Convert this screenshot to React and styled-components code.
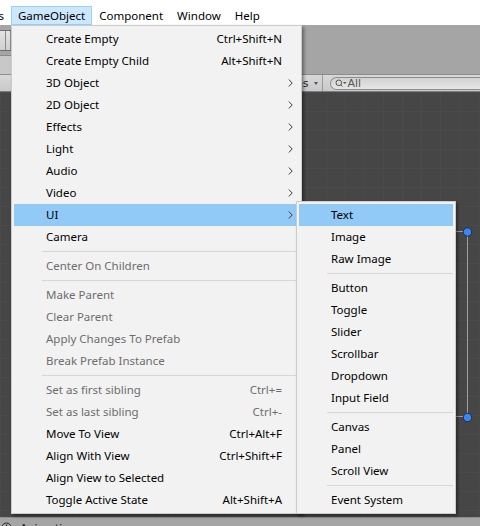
import React from 'react';
import styled, { createGlobalStyle } from 'styled-components';

const GlobalStyle = createGlobalStyle`
  html, body { margin: 0; padding: 0; overflow: hidden; background: #474747; }
  #root { width: 480px; height: 526px; }
`;

const Screen = styled.div`
  position: relative;
  width: 480px;
  height: 526px;
  overflow: hidden;
  display: flex;
  flex-direction: column;
  font-family: "Noto Sans", "Open Sans", sans-serif;
  font-size: 11.5px;
`;

/* ---------- Windows menu bar ---------- */
const MenuBar = styled.div`
  flex: none;
  height: 25px;
  background: #ffffff;
  display: flex;
  align-items: flex-end;
`;

const MenuBarClip = styled.div`
  flex: none;
  width: 11px;
  overflow: hidden;
  display: flex;
  justify-content: flex-end;
`;

const MenuBarItem = styled.div`
  flex: none;
  height: 19px;
  box-sizing: border-box;
  padding: 0 6px 1px;
  display: flex;
  align-items: center;
  white-space: nowrap;
  color: #000;
  border: 1px solid ${p => (p.$open ? '#99d1ff' : 'transparent')};
  background: ${p => (p.$open ? '#cce8ff' : 'transparent')};
`;

/* ---------- Unity background ---------- */
const MainToolbar = styled.div`
  flex: none;
  height: 27px;
  background: #a5a5a5;
  display: flex;
  align-items: flex-start;
  padding-top: 5px;
  box-sizing: border-box;
`;

const ToolGroup = styled.div`
  display: flex;
  margin-left: -22px;
  height: 21px;
  border: 1px solid #6f6f6f;
  border-radius: 3px;
  overflow: hidden;
  box-sizing: border-box;
`;

const ToolButton = styled.div`
  width: ${p => p.$w}px;
  height: 100%;
  background: linear-gradient(#e4e4e4, #cfcfcf);
  border-right: 1px solid #8a8a8a;
`;

const PanelsRow = styled.div`
  flex: none;
  height: 465px;
  display: flex;
`;

const Panel = styled.div`
  display: flex;
  flex-direction: column;
  overflow: hidden;
  position: relative;
  ${p => (p.$width ? `width: ${p.$width}px; flex: none;` : 'flex: 1; min-width: 0;')}
`;

const TabStrip = styled.div`
  flex: none;
  height: 22px;
  background: #a5a5a5;
  display: flex;
  align-items: flex-end;
`;

const Tab = styled.div`
  height: 19px;
  width: 90px;
  margin-left: -70px;
  background: #c8c8c8;
  border: 1px solid #8a8a8a;
  border-bottom: none;
  border-radius: 3px 3px 0 0;
  display: flex;
  align-items: center;
  justify-content: flex-end;
  padding-right: 2px;
  box-sizing: border-box;
`;

const PanelToolbar = styled.div`
  flex: none;
  height: 18px;
  box-sizing: border-box;
  background: linear-gradient(#d8d8d8, #c9c9c9);
  border-top: 1px solid #8c8c8c;
  border-bottom: 1px solid #7c7c7c;
  display: flex;
  align-items: center;
  padding-left: 12px;
  font-family: "DejaVu Sans", "Liberation Sans", sans-serif;
  font-size: 11px;
  color: #222;
`;

const GizmosButton = styled.div`
  flex: none;
  height: 100%;
  display: flex;
  align-items: center;
  gap: 5px;
  padding: 0 4px 0 6px;
  border-right: 1px solid #9a9a9a;
  white-space: nowrap;
`;

const DropTriangle = styled.span`
  width: 0;
  height: 0;
  border-left: 2.5px solid transparent;
  border-right: 2.5px solid transparent;
  border-top: 3px solid #555;
`;

const SearchField = styled.div`
  flex: none;
  width: 170px;
  height: 13px;
  margin-left: 7px;
  box-sizing: border-box;
  border: 1px solid #8c8c8c;
  border-right: none;
  border-radius: 7px 0 0 7px;
  background: linear-gradient(#d2d2d2, #e6e6e6);
  display: flex;
  align-items: center;
  padding-left: 4px;
  gap: 1px;
  color: #555;
  font-size: 11px;
`;

const DarkArea = styled.div`
  flex: 1;
  position: relative;
  background-color: #464646;
  background-image:
    linear-gradient(90deg, rgba(255,255,255,0.025) 1px, transparent 1px),
    linear-gradient(rgba(255,255,255,0.025) 1px, transparent 1px);
  background-size: 19px 19px;
`;

const HandlesLayer = styled.svg`
  position: absolute;
  left: 0;
  top: 0;
  width: 100%;
  height: 100%;
`;

const StatusBar = styled.div`
  flex: none;
  height: 22px;
  background: #a5a5a5;
  border-top: 1px solid #8f8f8f;
  box-sizing: border-box;
  display: flex;
  align-items: flex-start;
  gap: 8px;
  padding: 4px 0 0 1px;
  font-family: "DejaVu Sans", "Liberation Sans", sans-serif;
  font-size: 11px;
  color: #1a1a1a;
`;

/* ---------- Dropdown menus ---------- */
const Menu = styled.div`
  position: absolute;
  box-sizing: border-box;
  background: #f2f2f2;
  border: 1px solid #cccccc;
  padding: 2px;
  box-shadow: 2px 2px 3px rgba(0, 0, 0, 0.4);
`;

const MainMenu = styled(Menu)`
  left: 11px;
  top: 25px;
  width: 291px;
  z-index: 1;
`;

const SubMenu = styled(Menu)`
  left: 296px;
  top: 201px;
  width: 160px;
  z-index: 2;
`;

const Item = styled.div`
  height: 22px;
  box-sizing: border-box;
  padding-bottom: 2px;
  display: grid;
  grid-template-columns: 32px 1fr auto 17px;
  align-items: center;
  white-space: nowrap;
  background: ${p => (p.$active ? '#91c9f7' : 'transparent')};
  color: ${p => (p.$disabled ? '#6d6d6d' : '#000')};
`;

const Label = styled.span`
  grid-column: 2;
`;

const Shortcut = styled.span`
  grid-column: 3;
`;

const ArrowCell = styled.span`
  grid-column: 4;
  display: flex;
  justify-content: center;
  padding-top: 2px;
`;

const Separator = styled.div`
  height: 7px;
  display: flex;
  align-items: center;
  padding-left: 28px;
  &::after {
    content: '';
    flex: 1;
    height: 1px;
    background: #d7d7d7;
  }
`;

const Chevron = () => (
  <svg width="5" height="8" viewBox="0 0 5 8">
    <path d="M0.8 0.5 L4.2 4 L0.8 7.5" fill="none" stroke="#3c3c3c" strokeWidth="1" />
  </svg>
);

const mainItems = [
  { label: 'Create Empty', shortcut: 'Ctrl+Shift+N' },
  { label: 'Create Empty Child', shortcut: 'Alt+Shift+N' },
  { label: '3D Object', sub: true },
  { label: '2D Object', sub: true },
  { label: 'Effects', sub: true },
  { label: 'Light', sub: true },
  { label: 'Audio', sub: true },
  { label: 'Video', sub: true },
  { label: 'UI', sub: true, active: true },
  { label: 'Camera' },
  { sep: true },
  { label: 'Center On Children', disabled: true },
  { sep: true },
  { label: 'Make Parent', disabled: true },
  { label: 'Clear Parent', disabled: true },
  { label: 'Apply Changes To Prefab', disabled: true },
  { label: 'Break Prefab Instance', disabled: true },
  { sep: true },
  { label: 'Set as first sibling', shortcut: 'Ctrl+=', disabled: true },
  { label: 'Set as last sibling', shortcut: 'Ctrl+-', disabled: true },
  { label: 'Move To View', shortcut: 'Ctrl+Alt+F' },
  { label: 'Align With View', shortcut: 'Ctrl+Shift+F' },
  { label: 'Align View to Selected' },
  { label: 'Toggle Active State', shortcut: 'Alt+Shift+A' },
];

const uiItems = [
  { label: 'Text', active: true },
  { label: 'Image' },
  { label: 'Raw Image' },
  { sep: true },
  { label: 'Button' },
  { label: 'Toggle' },
  { label: 'Slider' },
  { label: 'Scrollbar' },
  { label: 'Dropdown' },
  { label: 'Input Field' },
  { sep: true },
  { label: 'Canvas' },
  { label: 'Panel' },
  { label: 'Scroll View' },
  { sep: true },
  { label: 'Event System' },
];

const MenuList = ({ items }) =>
  items.map((it, i) =>
    it.sep ? (
      <Separator key={i} />
    ) : (
      <Item key={i} $active={it.active} $disabled={it.disabled}>
        <Label>{it.label}</Label>
        {it.shortcut && <Shortcut>{it.shortcut}</Shortcut>}
        {it.sub && (
          <ArrowCell>
            <Chevron />
          </ArrowCell>
        )}
      </Item>
    )
  );

export default function App() {
  return (
    <>
      <GlobalStyle />
      <Screen>
        <MenuBar>
          <MenuBarClip>
            <MenuBarItem>Assets</MenuBarItem>
          </MenuBarClip>
          <MenuBarItem $open>GameObject</MenuBarItem>
          <MenuBarItem>Component</MenuBarItem>
          <MenuBarItem>Window</MenuBarItem>
          <MenuBarItem>Help</MenuBarItem>
        </MenuBar>

        <MainToolbar>
          <ToolGroup>
            <ToolButton $w={26} />
            <ToolButton $w={4} />
            <ToolButton $w={4} />
            <ToolButton $w={28} />
          </ToolGroup>
        </MainToolbar>

        <PanelsRow>
          <Panel $width={250}>
            <TabStrip>
              <Tab>
                <svg width="6" height="11" viewBox="0 0 6 11">
                  <circle cx="3" cy="3" r="2.2" fill="#777" />
                  <path d="M1 5.5 L4.5 8 L1 10.5 Z" fill="#f2f2f2" stroke="#777" strokeWidth="0.8" />
                </svg>
              </Tab>
            </TabStrip>
            <PanelToolbar />
            <DarkArea />
          </Panel>
          <Panel>
            <TabStrip />
            <PanelToolbar>
              <GizmosButton>
                <span>Gizmos</span>
                <DropTriangle />
              </GizmosButton>
              <SearchField>
                <svg width="12" height="9" viewBox="0 0 12 9">
                  <circle cx="3.8" cy="3.8" r="2.8" fill="none" stroke="#555" strokeWidth="1" />
                  <path d="M5.8 5.8 L7.6 7.6" stroke="#555" strokeWidth="1" />
                  <path d="M8 3 L11.5 3 L9.75 5 Z" fill="#555" />
                </svg>
                <span>All</span>
              </SearchField>
            </PanelToolbar>
            <DarkArea>
              <HandlesLayer>
                <path d="M100 139.5 H217.5 V324.5 H100" fill="none" stroke="#a0a0a0" strokeWidth="1" />
                <circle cx="217.5" cy="140" r="4.2" fill="#3a86f2" stroke="#1d2f4d" strokeWidth="1" />
                <circle cx="217.5" cy="325.5" r="4.2" fill="#3a86f2" stroke="#1d2f4d" strokeWidth="1" />
              </HandlesLayer>
            </DarkArea>
          </Panel>
        </PanelsRow>

        <StatusBar>
          <svg width="11" height="11" viewBox="0 0 11 11">
            <circle cx="5.5" cy="5.5" r="4.5" fill="none" stroke="#222" strokeWidth="1" />
            <path d="M5.5 2.5 V5.5 H7.5" fill="none" stroke="#222" strokeWidth="1" />
          </svg>
          <span>Animation</span>
        </StatusBar>

        <MainMenu>
          <MenuList items={mainItems} />
        </MainMenu>
        <SubMenu>
          <MenuList items={uiItems} />
        </SubMenu>
      </Screen>
    </>
  );
}
